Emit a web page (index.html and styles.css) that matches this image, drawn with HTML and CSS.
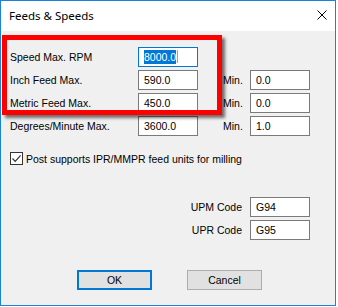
FILE: index.html
```html
<!DOCTYPE html>
<html>

<head>
  <meta charset="utf-8" />
  <title>Feeds &amp; Speeds</title>
  <link rel="stylesheet" href="styles.css">
</head>

<body>
  <div class="dialog">
    <div class="titlebar">
      <span class="title">Feeds &amp; Speeds</span>
      <svg class="close" width="10" height="10" viewBox="0 0 10 10">
        <path d="M0.5 0.5 L9.5 9.5 M9.5 0.5 L0.5 9.5" stroke="#000" stroke-width="1" fill="none" />
      </svg>
    </div>

    <div class="content">
      <div class="limits">
        <div class="row">
          <span class="label">Speed Max. RPM</span>
          <div class="field focus"><span class="sel">8000.0</span><span class="caret"></span></div>
        </div>
        <div class="row">
          <span class="label">Inch Feed Max.</span>
          <div class="field">590.0</div>
          <span></span>
          <span class="label">Min.</span>
          <div class="field">0.0</div>
        </div>
        <div class="row">
          <span class="label">Metric Feed Max.</span>
          <div class="field">450.0</div>
          <span></span>
          <span class="label">Min.</span>
          <div class="field">0.0</div>
        </div>
        <div class="row">
          <span class="label">Degrees/Minute Max.</span>
          <div class="field">3600.0</div>
          <span></span>
          <span class="label">Min.</span>
          <div class="field">1.0</div>
        </div>
      </div>

      <div class="check-row">
        <span class="checkbox">
          <svg width="11" height="11" viewBox="0 0 11 11">
            <path d="M1.5 5.5 L4.2 8.3 L9.6 2.4" stroke="#333" stroke-width="1.2" fill="none" />
          </svg>
        </span>
        <span class="check-label">Post supports IPR/MMPR feed units for milling</span>
      </div>

      <div class="codes">
        <div class="code-row">
          <span class="code-label">UPM Code</span>
          <div class="field">G94</div>
        </div>
        <div class="code-row">
          <span class="code-label">UPR Code</span>
          <div class="field">G95</div>
        </div>
      </div>

      <div class="buttons">
        <div class="button default">OK</div>
        <div class="button">Cancel</div>
      </div>
    </div>

    <!-- red annotation frame drawn over the dialog -->
    <div class="callout"></div>
  </div>
</body>

</html>
```

FILE: styles.css
```css
html,
body {
  margin: 0;
  background-color: #ffffff;
}

body {
  font-family: "Liberation Sans", Arial, sans-serif;
  font-size: 10.5px;
  color: #000000;
}

.dialog {
  position: relative;
  box-sizing: border-box;
  width: 336px;
  height: 306px;
  border: 1px solid #1883d7;
  background-color: #f0f0f0;
}

.titlebar {
  display: flex;
  align-items: flex-start;
  height: 30px;
  background-color: #ffffff;
}

.title {
  font-family: "Noto Sans", "Open Sans", sans-serif;
  font-size: 11.5px;
  margin-left: 8px;
  margin-top: 7px;
}

.close {
  margin-left: auto;
  margin-right: 8px;
  margin-top: 9px;
}

.content {
  padding: 16px 0 0 9px;
}

.limits {
  display: flex;
  flex-direction: column;
  gap: 3px;
}

.row {
  display: grid;
  grid-template-columns: 128px 60px 25px 27px 60px;
  height: 20px;
  align-items: center;
}

.field {
  box-sizing: border-box;
  height: 20px;
  line-height: 18px;
  padding-left: 5px;
  border: 1px solid #7a7a7a;
  background-color: #ffffff;
  white-space: nowrap;
}

.field.focus {
  border-color: #0078d7;
}

.sel {
  background-color: #0078d7;
  color: #ffffff;
  padding: 1px 0;
}

.caret {
  display: inline-block;
  width: 1px;
  height: 13px;
  margin-left: 1px;
  vertical-align: -2px;
  background-color: #ff8a1e;
}

.check-row {
  display: flex;
  align-items: center;
  gap: 3px;
  margin-top: 16px;
  height: 13px;
}

.checkbox {
  box-sizing: border-box;
  width: 13px;
  height: 13px;
  border: 1px solid #333333;
  background-color: #ffffff;
  display: flex;
}

.codes {
  display: flex;
  flex-direction: column;
  gap: 3px;
  margin-top: 32px;
}

.code-row {
  display: grid;
  grid-template-columns: 232px 60px;
  column-gap: 8px;
  align-items: center;
  height: 20px;
}

.code-label {
  text-align: right;
}

.buttons {
  display: flex;
  gap: 35px;
  margin-top: 30px;
  margin-left: 67px;
}

.button {
  box-sizing: border-box;
  width: 75px;
  height: 20px;
  display: flex;
  align-items: center;
  justify-content: center;
  background-color: #e1e1e1;
  border: 1px solid #adadad;
}

.button.default {
  border: 2px solid #0078d7;
}

.callout {
  position: absolute;
  left: 1px;
  top: 34px;
  width: 210px;
  height: 70px;
  border: 5px solid #ff0000;
  box-shadow: 3px 3px 3px rgba(0, 0, 0, 0.55);
}
```
